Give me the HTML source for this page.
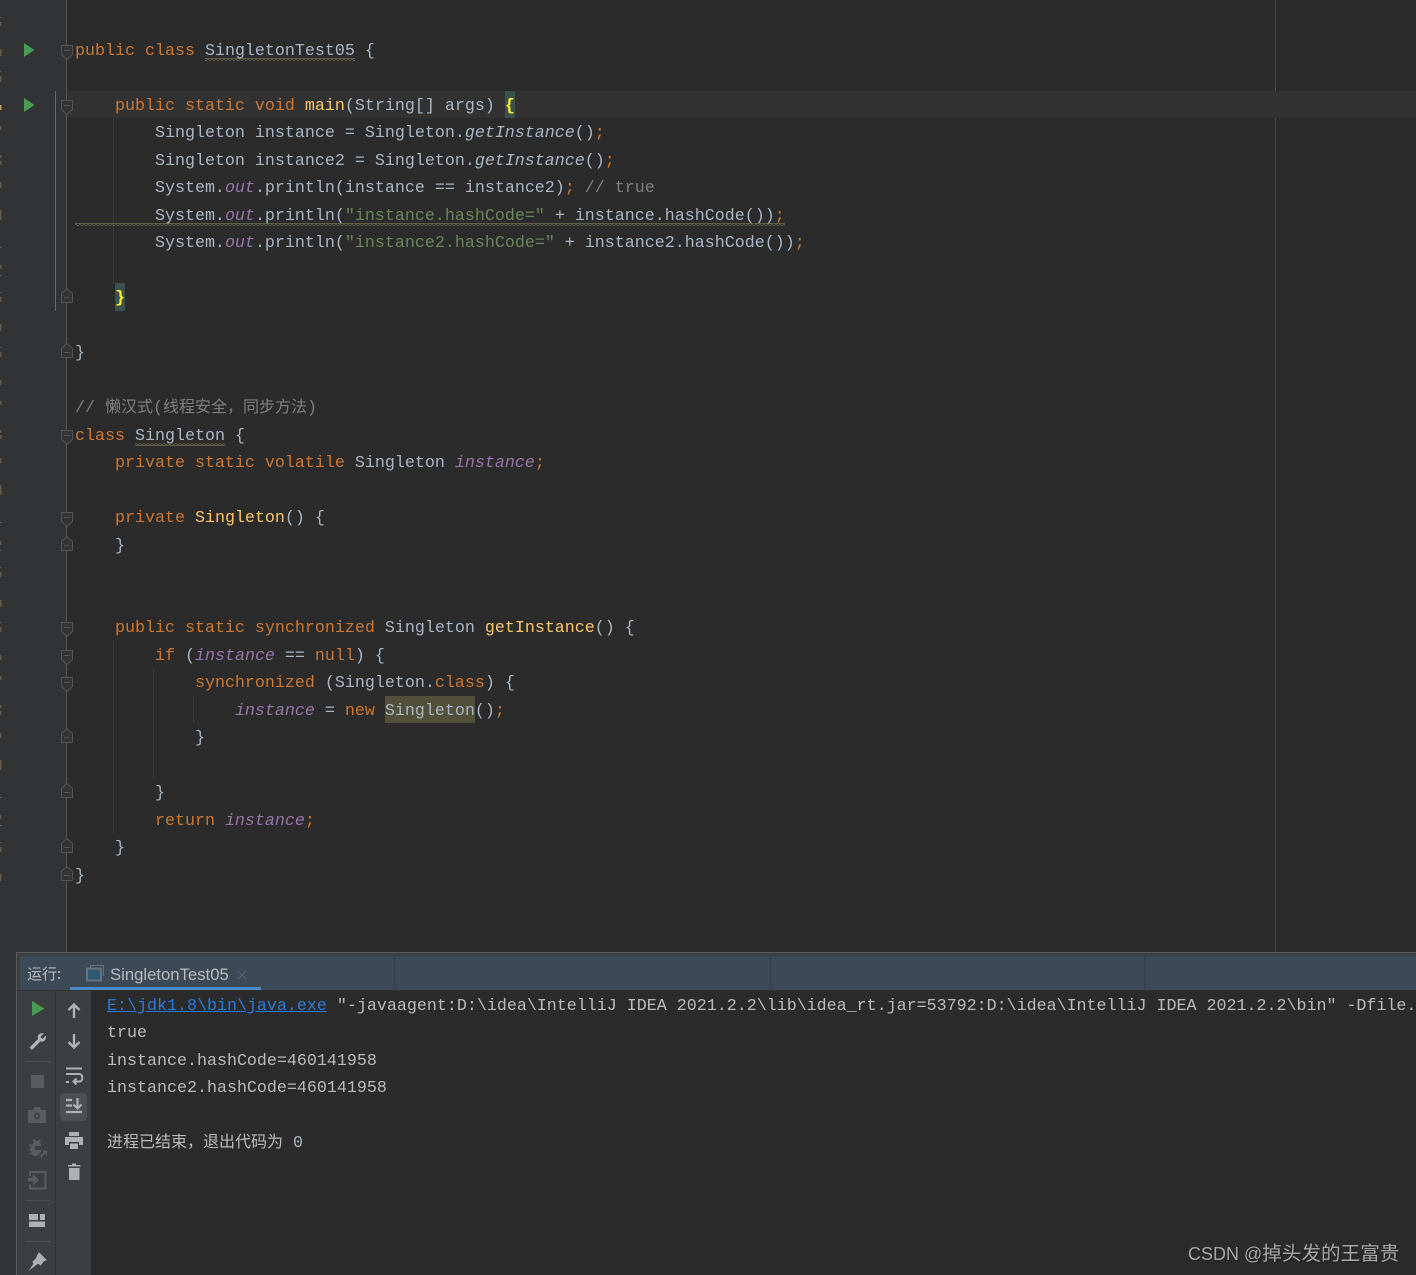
<!DOCTYPE html>
<html lang="zh">
<head>
<meta charset="utf-8">
<title>SingletonTest05</title>
<style>
html,body{margin:0;padding:0;background:#2b2b2b;}
#p{position:relative;width:1416px;height:1275px;overflow:hidden;background:#2b2b2b;}
.a{position:absolute;}
pre{margin:0;position:absolute;font-family:"Liberation Mono","Noto Sans CJK SC",monospace;font-size:16.67px;line-height:27px;height:27px;white-space:pre;color:#a9b7c6;}
.x{left:75px;}
.y{left:107px;width:1309px;overflow:hidden;color:#bbbbbb;}
.k{color:#cc7832}.m{color:#ffc66d}.s{color:#6a8759}.c{color:#808080}
.f{color:#9876aa;font-style:italic}
.cj{font-family:"Noto Sans CJK SC",sans-serif;font-size:16px;line-height:16px;}
.b{color:#ffef28;font-weight:bold}
.l{color:#287bde;text-decoration:underline}
svg{position:absolute;overflow:visible}
</style>
</head>
<body>
<div id="p">
<!-- gutter -->
<div class="a" style="left:0;top:0;width:66px;height:1275px;background:#313335"></div>
<div class="a" style="left:66px;top:0;width:1px;height:952px;background:#555555"></div>
<div class="a" style="left:1275px;top:0;width:1px;height:952px;background:#4a4a4a"></div>
<!-- caret row + highlights -->
<div class="a" style="left:67px;top:91px;width:1349px;height:27px;background:#323232"></div>
<div class="a" style="left:505px;top:91px;width:10px;height:27px;background:#3b514d"></div>
<div class="a" style="left:115px;top:283px;width:10px;height:28px;background:#3b514d"></div>
<div class="a" style="left:385px;top:696px;width:90px;height:27px;background:#52503a"></div>
<!-- vcs line -->
<div class="a" style="left:55px;top:91px;width:1px;height:220px;background:#587266"></div>
<!-- indent guides -->
<div class="a" style="left:113px;top:118px;width:1px;height:165px;background:#3b3b3b"></div>
<div class="a" style="left:113px;top:640px;width:1px;height:193px;background:#3b3b3b"></div>
<div class="a" style="left:153px;top:668px;width:1px;height:110px;background:#3b3b3b"></div>
<div class="a" style="left:193px;top:696px;width:1px;height:27px;background:#3b3b3b"></div>

<!-- left-edge stripe ticks -->
<svg class="a" style="left:0;top:0" width="3" height="900" fill="#6b5a42">
<rect y="17" width="1.500" height="1"/><rect y="22" width="1.500" height="4"/><rect y="49" width="1.500" height="7"/><rect y="71" width="1.500" height="1"/><rect y="76" width="1.500" height="6"/><rect y="105" width="1.500" height="5" fill="#c9a15e"/><rect y="126" width="1.500" height="4"/><rect y="155" width="1.500" height="3"/><rect y="161" width="1.500" height="4"/><rect y="182" width="1.500" height="6"/><rect y="210" width="1.500" height="10"/><rect y="247" width="1.500" height="1" fill="#5d6a75"/><rect y="265" width="1.500" height="4"/><rect y="275" width="1.500" height="1" fill="#5d6a75"/><rect y="292" width="1.500" height="1"/><rect y="297" width="1.500" height="5"/><rect y="324" width="1.500" height="7"/><rect y="347" width="1.500" height="1"/><rect y="352" width="1.500" height="5"/><rect y="380" width="1.500" height="5"/><rect y="401" width="1.500" height="4"/><rect y="430" width="1.500" height="3"/><rect y="435" width="1.500" height="4"/><rect y="458" width="1.500" height="5"/><rect y="485" width="1.500" height="10"/><rect y="522" width="1.500" height="1" fill="#5d6a75"/><rect y="541" width="1.500" height="4"/><rect y="550" width="1.500" height="1" fill="#5d6a75"/><rect y="567" width="1.500" height="1"/><rect y="572" width="1.500" height="5"/><rect y="600" width="1.500" height="7"/><rect y="622" width="1.500" height="1"/><rect y="627" width="1.500" height="5"/><rect y="655" width="1.500" height="5"/><rect y="676" width="1.500" height="4"/><rect y="705" width="1.500" height="3"/><rect y="711" width="1.500" height="4"/><rect y="733" width="1.500" height="5"/><rect y="760" width="1.500" height="10"/><rect y="797" width="1.500" height="1" fill="#5d6a75"/><rect y="815" width="1.500" height="4"/><rect y="825" width="1.500" height="1" fill="#5d6a75"/><rect y="842" width="1.500" height="1"/><rect y="847" width="1.500" height="5"/><rect y="874" width="1.500" height="7"/>
</svg>

<!-- run gutter icons -->
<svg class="a" style="left:24px;top:43px" width="11" height="14"><path d="M0 0L10.500 7L0 14Z" fill="#499c54"/></svg>
<svg class="a" style="left:24px;top:98px" width="11" height="14"><path d="M0 0L10.500 7L0 14Z" fill="#499c54"/></svg>

<!-- fold markers -->
<svg class="a" style="left:61px;top:0" width="13" height="900" fill="#313335" stroke="#555555" stroke-width="1">
<path d="M0.500 45.500H11.500V54.500L6 59.500L0.500 54.500Z"/><path d="M3 50.500H9"/>
<path d="M0.500 100.500H11.500V109.500L6 114.500L0.500 109.500Z"/><path d="M3 105.500H9"/>
<path d="M0.500 430.500H11.500V439.500L6 444.500L0.500 439.500Z"/><path d="M3 435.500H9"/>
<path d="M0.500 512.500H11.500V521.500L6 526.500L0.500 521.500Z"/><path d="M3 517.500H9"/>
<path d="M0.500 622.500H11.500V631.500L6 636.500L0.500 631.500Z"/><path d="M3 627.500H9"/>
<path d="M0.500 650.500H11.500V659.500L6 664.500L0.500 659.500Z"/><path d="M3 655.500H9"/>
<path d="M0.500 677.500H11.500V686.500L6 691.500L0.500 686.500Z"/><path d="M3 682.500H9"/>
<path d="M0.500 302.500H11.500V293.500L6 288.500L0.500 293.500Z"/><path d="M3 297.500H9"/>
<path d="M0.500 357.500H11.500V348.500L6 343.500L0.500 348.500Z"/><path d="M3 352.500H9"/>
<path d="M0.500 550.500H11.500V541.500L6 536.500L0.500 541.500Z"/><path d="M3 545.500H9"/>
<path d="M0.500 742.500H11.500V733.500L6 728.500L0.500 733.500Z"/><path d="M3 737.500H9"/>
<path d="M0.500 797.500H11.500V788.500L6 783.500L0.500 788.500Z"/><path d="M3 792.500H9"/>
<path d="M0.500 852.500H11.500V843.500L6 838.500L0.500 843.500Z"/><path d="M3 847.500H9"/>
<path d="M0.500 880.500H11.500V871.500L6 866.500L0.500 871.500Z"/><path d="M3 875.500H9"/>
</svg>

<!-- code -->
<pre class="x" style="top:38px"><span class="k">public class </span>SingletonTest05 {</pre>
<pre class="x" style="top:93px">    <span class="k">public static void </span><span class="m">main</span>(String[] args) <span class="b">{</span></pre>
<pre class="x" style="top:120px">        Singleton instance = Singleton.<i>getInstance</i>()<span class="k">;</span></pre>
<pre class="x" style="top:148px">        Singleton instance2 = Singleton.<i>getInstance</i>()<span class="k">;</span></pre>
<pre class="x" style="top:175px">        System.<span class="f">out</span>.println(instance == instance2)<span class="k">;</span> <span class="c">// true</span></pre>
<pre class="x" style="top:203px">        System.<span class="f">out</span>.println(<span class="s">"instance.hashCode="</span> + instance.hashCode())<span class="k">;</span></pre>
<pre class="x" style="top:230px">        System.<span class="f">out</span>.println(<span class="s">"instance2.hashCode="</span> + instance2.hashCode())<span class="k">;</span></pre>
<pre class="x" style="top:285px">    <span class="b">}</span></pre>
<pre class="x" style="top:340px">}</pre>
<pre class="x" style="top:395px"><span class="c">// <span class="cj">懒汉式</span>(<span class="cj">线程安全，同步方法</span>)</span></pre>
<pre class="x" style="top:423px"><span class="k">class </span>Singleton {</pre>
<pre class="x" style="top:450px">    <span class="k">private static volatile </span>Singleton <span class="f">instance</span><span class="k">;</span></pre>
<pre class="x" style="top:505px">    <span class="k">private </span><span class="m">Singleton</span>() {</pre>
<pre class="x" style="top:533px">    }</pre>
<pre class="x" style="top:615px">    <span class="k">public static synchronized </span>Singleton <span class="m">getInstance</span>() {</pre>
<pre class="x" style="top:643px">        <span class="k">if </span>(<span class="f">instance</span> == <span class="k">null</span>) {</pre>
<pre class="x" style="top:670px">            <span class="k">synchronized </span>(Singleton.<span class="k">class</span>) {</pre>
<pre class="x" style="top:698px">                <span class="f">instance</span> = <span class="k">new </span>Singleton()<span class="k">;</span></pre>
<pre class="x" style="top:725px">            }</pre>
<pre class="x" style="top:780px">        }</pre>
<pre class="x" style="top:808px">        <span class="k">return </span><span class="f">instance</span><span class="k">;</span></pre>
<pre class="x" style="top:835px">    }</pre>
<pre class="x" style="top:863px">}</pre>

<!-- warning squiggles -->
<svg class="a" style="left:0;top:0" width="1416" height="500">
<defs><pattern id="w" width="4" height="3" patternUnits="userSpaceOnUse"><path d="M0 2.500L2 0.500L4 2.500" fill="none" stroke="#86845a" stroke-width="0.800"/></pattern></defs>
<rect x="205" y="58" width="150" height="3" fill="url(#w)"/>
<rect x="75" y="223" width="710" height="3" fill="url(#w)"/>
<rect x="135" y="443" width="90" height="3" fill="url(#w)"/>
</svg>

<!-- run panel -->
<div class="a" style="left:0;top:952px;width:16px;height:323px;background:#313335"></div>
<div class="a" style="left:16px;top:952px;width:1400px;height:1px;background:#5a5a5a"></div>
<div class="a" style="left:16px;top:952px;width:1px;height:323px;background:#5a5a5a"></div>
<div class="a" style="left:17px;top:953px;width:1399px;height:3px;background:#3c3f41"></div>
<div class="a" style="left:17px;top:953px;width:3px;height:37px;background:#3c3f41"></div>
<div class="a" style="left:20px;top:956px;width:1396px;height:34px;background:#3c4957"></div>
<div class="a" style="left:394px;top:956px;width:1px;height:34px;background:#36404d"></div>
<div class="a" style="left:770px;top:956px;width:1px;height:34px;background:#36404d"></div>
<div class="a" style="left:1144px;top:956px;width:1px;height:34px;background:#36404d"></div>
<div class="a" style="left:17px;top:990px;width:1399px;height:1px;background:#323232"></div>
<div class="a" style="left:70px;top:987px;width:191px;height:3px;background:#4a88c7"></div>
<div class="a" style="left:27px;top:964px;font:15px/20px 'Noto Sans CJK SC',sans-serif;color:#bbbbbb;">运行:</div>
<svg class="a" style="left:86px;top:965px" width="19" height="17">
<path d="M4.500 3V0.500H17.500V11" fill="none" stroke="#6b737a" stroke-width="1"/>
<rect x="1" y="3.500" width="14" height="12" fill="#2f5a73" stroke="#6b737a" stroke-width="2"/>
</svg>
<div class="a" style="left:110px;top:965px;font:16.700px/20px 'Liberation Sans',sans-serif;color:#bbbbbb;">SingletonTest05</div>
<svg class="a" style="left:237px;top:970px" width="10" height="10"><path d="M0.500 0.500L9.500 9.500M9.500 0.500L0.500 9.500" stroke="#5f6366" stroke-width="1"/></svg>

<!-- toolbars -->
<div class="a" style="left:17px;top:991px;width:38px;height:284px;background:#3c3f41"></div>
<div class="a" style="left:55px;top:991px;width:1px;height:284px;background:#323232"></div>
<div class="a" style="left:56px;top:991px;width:35px;height:284px;background:#3c3f41"></div>
<div class="a" style="left:25px;top:1061px;width:25px;height:1px;background:#515151"></div>
<div class="a" style="left:25px;top:1200px;width:25px;height:1px;background:#515151"></div>
<div class="a" style="left:25px;top:1241px;width:25px;height:1px;background:#515151"></div>
<div class="a" style="left:60px;top:1093px;width:27px;height:28px;border-radius:4px;background:#4c5052"></div>

<svg class="a" style="left:0;top:0" width="100" height="1275">
<!-- run -->
<path d="M32 1001L44.500 1008.500L32 1016Z" fill="#499c54"/>
<!-- wrench -->
<path d="M29.500 1047.500L38 1039C36.800 1035.500 39.500 1032.500 44 1033.300L40.500 1036.800L42.500 1039L46 1035.500C46.800 1040 43.500 1042.500 40.300 1041.500L32 1050Z" fill="#afb1b3"/>
<!-- stop -->
<rect x="31" y="1075" width="13" height="13" fill="#5a5d5f"/>
<!-- camera -->
<path d="M28 1110H33L34.500 1107H40L41.500 1110H46V1123H28Z" fill="#5a5d5f"/><circle cx="37" cy="1116" r="3.200" fill="#3c3f41"/><circle cx="37" cy="1116" r="1.500" fill="#5a5d5f"/>
<!-- bug -->
<path d="M34 1139L36 1141H38L40 1139L41 1140.500L39.500 1142L41 1144V1146H35L35 1150H41V1152L37 1156H34L32 1154L29.500 1155L29 1153.500L31 1152.500V1150.500H29V1148.500H31V1146.500L29 1145.500L29.500 1144L32 1145L34 1142.500L33 1140.500Z" fill="#5a5d5f"/>
<path d="M39 1157L44 1152L41.500 1150.500H47V1156L45.500 1153.500L41 1157.500Z" fill="#5a5d5f"/>
<!-- exit -->
<path d="M30 1176V1172H45.500V1188.500H30V1184.500" fill="none" stroke="#5a5d5f" stroke-width="2"/>
<path d="M28 1179H36M33 1175.500L37.500 1180L33 1184.500M28 1180.500H36" fill="none" stroke="#5a5d5f" stroke-width="2"/>
<!-- layout -->
<path d="M29 1214H38V1220H29ZM40 1214H45V1220H40ZM29 1221.500H45V1227H29Z" fill="#afb1b3"/>
<!-- pin -->
<path d="M39 1253L46 1260L43.500 1260.800L40.500 1265L38.800 1263.500L34 1263.500L33 1262L36.500 1258.500L37.500 1255.500Z" fill="#afb1b3" stroke="#afb1b3"/>
<path d="M28.500 1271L35 1261.500L37.500 1264Z" fill="#afb1b3"/>
<!-- up / down arrows -->
<path d="M74 1004.500V1018M68.500 1010L74 1004.500L79.500 1010" fill="none" stroke="#afb1b3" stroke-width="2.400"/>
<path d="M74 1034V1047.500M68.500 1042L74 1047.500L79.500 1042" fill="none" stroke="#afb1b3" stroke-width="2.400"/>
<!-- soft wrap -->
<path d="M66 1068.500H82M66 1074H79C83.500 1074 83.500 1081.500 79 1081.500H74M76.500 1078.500L73.500 1081.500L76.500 1084.500M66 1082H69" fill="none" stroke="#afb1b3" stroke-width="2"/>
<!-- scroll to end -->
<path d="M66 1100H72M66 1105.500H72M66 1112H82M77.500 1098V1108.500M73.500 1104.500L77.500 1108.500L81.500 1104.500" fill="none" stroke="#afb1b3" stroke-width="2.200"/>
<!-- print -->
<path d="M69 1132H79V1136H69ZM65 1137H83V1145H79V1142H69V1145H65ZM70 1143.500H78V1149H70Z" fill="#afb1b3"/>
<!-- trash -->
<path d="M68 1165H72V1163.500H76V1165H80.500V1166.500H68ZM69 1168H79.500V1180H69Z" fill="#afb1b3"/>
</svg>

<!-- console -->
<pre class="y" style="top:993px"><span class="l">E:\jdk1.8\bin\java.exe</span> "-javaagent:D:\idea\IntelliJ IDEA 2021.2.2\lib\idea_rt.jar=53792:D:\idea\IntelliJ IDEA 2021.2.2\bin" -Dfile.encoding=UTF-8</pre>
<pre class="y" style="top:1020px">true</pre>
<pre class="y" style="top:1048px">instance.hashCode=460141958</pre>
<pre class="y" style="top:1075px">instance2.hashCode=460141958</pre>
<pre class="y" style="top:1130px"><span class="cj">进程已结束，退出代码为</span> <span style="color:#a9b7c6">0</span></pre>

<!-- watermark -->
<div class="a" style="left:1188px;top:1240px;font:18px/28px 'Liberation Sans','Noto Sans CJK SC',sans-serif;color:#a8a8a8;white-space:nowrap;text-shadow:1px 1px 1px #1e1e1e">CSDN @<span style="font-size:19.600px">掉头发的王富贵</span></div>
</div>
</body>
</html>
